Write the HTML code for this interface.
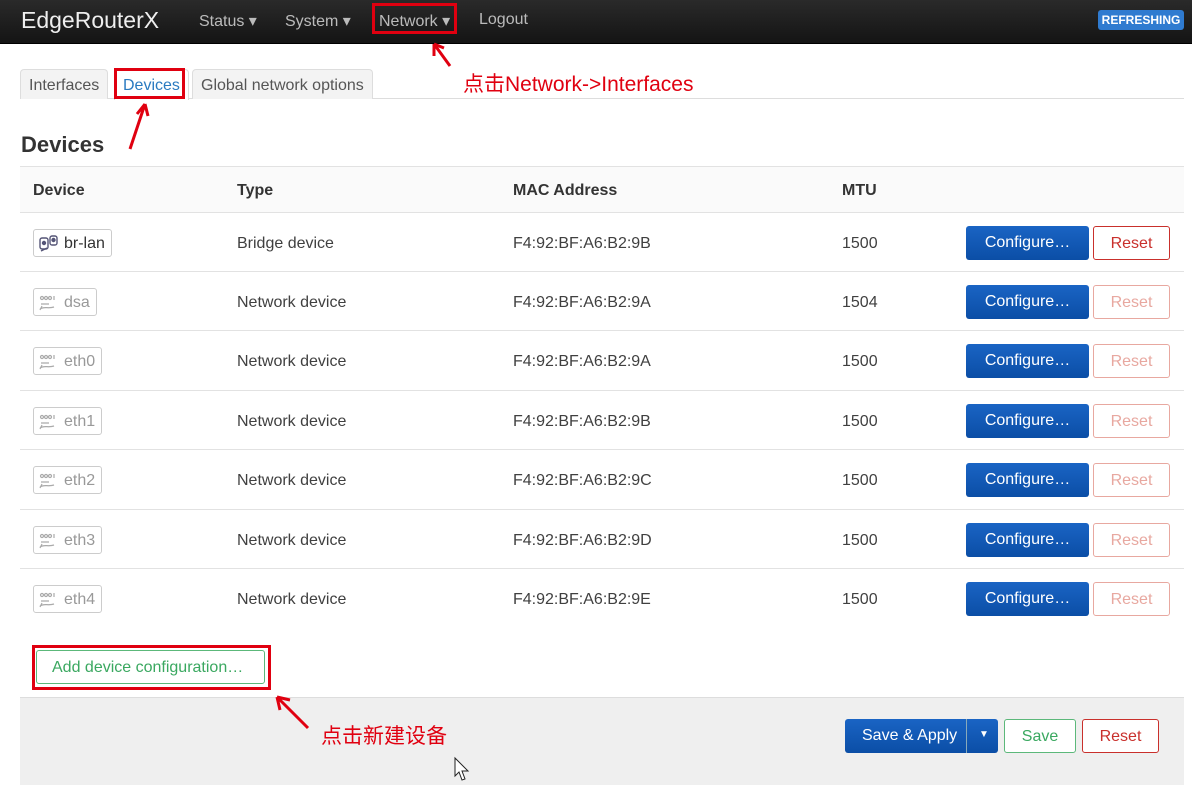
<!DOCTYPE html>
<html><head><meta charset="utf-8"><style>
*{box-sizing:border-box}
body{margin:0;width:1192px;height:789px;background:#fff;font-family:"Liberation Sans","Noto Sans CJK SC",sans-serif;position:relative;overflow:hidden;color:#404040}
.nav{position:absolute;left:0;top:0;width:1192px;height:44px;background:linear-gradient(#2a2a2a,#141414);border-bottom:1px solid #000}
.nav span{position:absolute;top:10px;color:#bbb;font-size:16px}
.abs{position:absolute}
.tab{position:absolute;top:69px;height:30px;border:1px solid #ddd;border-bottom:none;background:#f3f3f3;border-radius:4px 4px 0 0;font-size:16px;padding:7px 8px;color:#555}
.row{position:absolute;left:20px;width:1164px;height:59px;border-top:1px solid #e2e2e2;font-size:16px}
.row div{position:absolute;top:22px}
.row .badge{top:16px;left:13px;height:28px;border:1px solid #ccc;border-radius:3px;padding:5px 6px 0 30px;color:#999;font-size:16px;line-height:17px}
.badge svg{position:absolute;left:5px;top:5px}
.row .cfg{left:946px;top:13px;width:123px;height:34px;background:linear-gradient(#1a64c4,#0b4ea6);border-radius:3px;color:#fff;text-align:center;padding-top:8px}
.row .rst{left:1073px;top:13px;width:77px;height:34px;border:1px solid #e8a8a0;border-radius:3px;color:#e8a8a0;text-align:center;padding-top:8px}
.red{position:absolute;border:3px solid #e00010}
</style></head><body>
<svg width="0" height="0" style="position:absolute"><defs>
<g id="ni" fill="none" stroke="#aaa" stroke-width="1.2"><circle cx="3" cy="4" r="1.5"/><circle cx="7" cy="4" r="1.5"/><circle cx="11" cy="4" r="1.5"/><path d="M15 2v4M2 10h8M1 15c4-3 8 0 14-2M3 12l-2 4"/></g>
</defs></svg>
<div class="nav">
<span style="left:21px;top:7px;font-size:23px;color:#eee">EdgeRouterX</span>
<span style="left:199px;top:11px">Status ▾</span>
<span style="left:285px;top:11px">System ▾</span>
<span style="left:379px;top:11px">Network ▾</span>
<span style="left:479px;top:11px">Logout</span>
<div class="abs" style="left:1098px;top:10px;width:86px;height:20px;background:#2f7bd0;border-radius:3px;color:#fff;font-size:12px;font-weight:bold;text-align:center;padding-top:3px">REFRESHING</div>
</div>
<div class="abs" style="left:20px;top:98px;width:1164px;border-top:1px solid #ddd"></div>
<div class="tab" style="left:20px">Interfaces</div>
<div class="tab" style="left:114px;background:#fff;color:#2a7ac0;height:31px">Devices</div>
<div class="tab" style="left:192px">Global network options</div>
<div class="abs" style="left:21px;top:132px;font-size:22px;font-weight:bold;color:#333">Devices</div>
<div class="abs" style="left:20px;top:166px;width:1164px;height:46px;background:#fafafa;border-top:1px solid #e2e2e2;font-size:16px;font-weight:bold;color:#333">
<span class="abs" style="left:13px;top:15px">Device</span><span class="abs" style="left:217px;top:15px">Type</span><span class="abs" style="left:493px;top:15px">MAC Address</span><span class="abs" style="left:822px;top:15px">MTU</span></div>

<div class="row" style="top:212px"><div class="badge" style="color:#333"><svg width="20" height="18"><g fill="none" stroke="#557" stroke-width="1.4"><rect x="1" y="3" width="8" height="11" rx="2"/><rect x="11" y="1" width="7" height="9" rx="2"/><circle cx="5" cy="8" r="1.5" fill="#557"/><circle cx="14.5" cy="5" r="1.5" fill="#557"/><path d="M2 16l6-3"/></g></svg>br-lan</div><div style="left:217px">Bridge device</div><div style="left:493px">F4:92:BF:A6:B2:9B</div><div style="left:822px">1500</div><div class="cfg">Configure…</div><div class="rst" style="border-color:#c9302c;color:#c9302c">Reset</div></div>
<div class="row" style="top:271px"><div class="badge"><svg width="18" height="18"><use href="#ni"/></svg>dsa</div><div style="left:217px">Network device</div><div style="left:493px">F4:92:BF:A6:B2:9A</div><div style="left:822px">1504</div><div class="cfg">Configure…</div><div class="rst">Reset</div></div>
<div class="row" style="top:330px"><div class="badge"><svg width="18" height="18"><use href="#ni"/></svg>eth0</div><div style="left:217px">Network device</div><div style="left:493px">F4:92:BF:A6:B2:9A</div><div style="left:822px">1500</div><div class="cfg">Configure…</div><div class="rst">Reset</div></div>
<div class="row" style="top:390px"><div class="badge"><svg width="18" height="18"><use href="#ni"/></svg>eth1</div><div style="left:217px">Network device</div><div style="left:493px">F4:92:BF:A6:B2:9B</div><div style="left:822px">1500</div><div class="cfg">Configure…</div><div class="rst">Reset</div></div>
<div class="row" style="top:449px"><div class="badge"><svg width="18" height="18"><use href="#ni"/></svg>eth2</div><div style="left:217px">Network device</div><div style="left:493px">F4:92:BF:A6:B2:9C</div><div style="left:822px">1500</div><div class="cfg">Configure…</div><div class="rst">Reset</div></div>
<div class="row" style="top:509px"><div class="badge"><svg width="18" height="18"><use href="#ni"/></svg>eth3</div><div style="left:217px">Network device</div><div style="left:493px">F4:92:BF:A6:B2:9D</div><div style="left:822px">1500</div><div class="cfg">Configure…</div><div class="rst">Reset</div></div>
<div class="row" style="top:568px"><div class="badge"><svg width="18" height="18"><use href="#ni"/></svg>eth4</div><div style="left:217px">Network device</div><div style="left:493px">F4:92:BF:A6:B2:9E</div><div style="left:822px">1500</div><div class="cfg">Configure…</div><div class="rst">Reset</div></div>

<div class="abs" style="left:36px;top:650px;width:229px;height:34px;border:1px solid #5cb87a;border-radius:3px;color:#3aa860;font-size:16px;padding:8px 0 0 15px">Add device configuration…</div>
<div class="abs" style="left:20px;top:697px;width:1164px;height:88px;background:#efefef;border-top:1px solid #ddd"></div>
<div class="abs" style="left:845px;top:719px;width:153px;height:34px;background:linear-gradient(#1a64c4,#0b4ea6);border-radius:3px;color:#fff;font-size:16px;padding:8px 0 0 17px">Save &amp; Apply<span class="abs" style="left:121px;top:0;height:34px;border-left:1px solid #8ab;padding:10px 0 0 12px;font-size:10px">▼</span></div>
<div class="abs" style="left:1004px;top:719px;width:72px;height:34px;border:1px solid #5cb87a;border-radius:3px;background:#fff;color:#3aa860;font-size:16px;text-align:center;padding-top:8px">Save</div>
<div class="abs" style="left:1082px;top:719px;width:77px;height:34px;border:1px solid #c9302c;border-radius:3px;background:#fff;color:#c9302c;font-size:16px;text-align:center;padding-top:8px">Reset</div>

<div class="red" style="left:372px;top:3px;width:85px;height:31px"></div>
<div class="red" style="left:114px;top:68px;width:71px;height:31px"></div>
<div class="red" style="left:32px;top:645px;width:239px;height:45px"></div>
<div class="abs" style="left:463px;top:68px;color:#e00010;font-size:21px">点击Network-&gt;Interfaces</div>
<div class="abs" style="left:321px;top:720px;color:#e00010;font-size:21px">点击新建设备</div>
<svg class="abs" style="left:0;top:0" width="1192" height="789"><g stroke="#e00010" stroke-width="3" fill="none">
<path d="M450 66 L434 44 M434 44 L434 56 M434 44 L444 48"/>
<path d="M130 149 L145 104 M145 104 L137 114 M145 104 L148 116"/>
<path d="M308 728 L277 697 M277 697 L280 710 M277 697 L290 700"/></g>
<path d="M455 758 L455 776 L459 772 L462 780 L465 779 L462 771 L468 771 Z" fill="#fff" stroke="#222" stroke-width="1"/></svg>
</body></html>
